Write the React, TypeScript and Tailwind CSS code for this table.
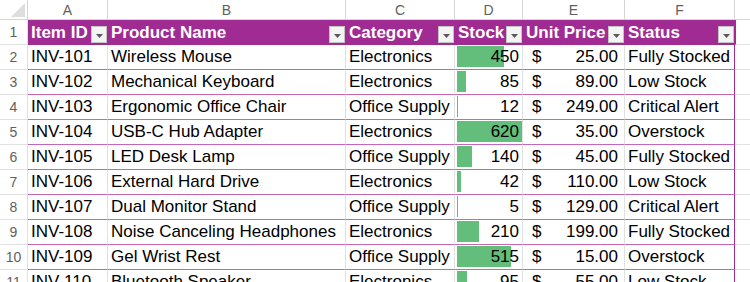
import React from "react";

type Row = {
  id: string;
  name: string;
  cat: string;
  stock: number;
  price: string;
  status: string;
};

const rows: Row[] = [
  { id: "INV-101", name: "Wireless Mouse", cat: "Electronics", stock: 450, price: "25.00", status: "Fully Stocked" },
  { id: "INV-102", name: "Mechanical Keyboard", cat: "Electronics", stock: 85, price: "89.00", status: "Low Stock" },
  { id: "INV-103", name: "Ergonomic Office Chair", cat: "Office Supply", stock: 12, price: "249.00", status: "Critical Alert" },
  { id: "INV-104", name: "USB-C Hub Adapter", cat: "Electronics", stock: 620, price: "35.00", status: "Overstock" },
  { id: "INV-105", name: "LED Desk Lamp", cat: "Office Supply", stock: 140, price: "45.00", status: "Fully Stocked" },
  { id: "INV-106", name: "External Hard Drive", cat: "Electronics", stock: 42, price: "110.00", status: "Low Stock" },
  { id: "INV-107", name: "Dual Monitor Stand", cat: "Office Supply", stock: 5, price: "129.00", status: "Critical Alert" },
  { id: "INV-108", name: "Noise Canceling Headphones", cat: "Electronics", stock: 210, price: "199.00", status: "Fully Stocked" },
  { id: "INV-109", name: "Gel Wrist Rest", cat: "Office Supply", stock: 515, price: "15.00", status: "Overstock" },
  { id: "INV-110", name: "Bluetooth Speaker", cat: "Electronics", stock: 95, price: "55.00", status: "Low Stock" },
];

const MAX = 620;
const BAR_MAX = 65;

function Dropdown() {
  return (
    <div className="ml-auto mr-[1px] mt-[6px] flex h-[17px] w-[16px] shrink-0 items-center justify-center border border-[#c4c4c4] bg-[#f4f4f4]">
      <svg width="7" height="4" viewBox="0 0 7 4" className="mt-[2px]">
        <polygon points="0,0 7,0 3.5,4" fill="#5a5a5a" />
      </svg>
    </div>
  );
}

function HeaderCell({ label, w }: { label: string; w: string }) {
  return (
    <div className={`${w} flex h-[25px] shrink-0 items-start bg-[#a02b93] pl-[3px]`}>
      <span className="whitespace-nowrap text-[17px] font-bold leading-[25px] text-white">{label}</span>
      <Dropdown />
    </div>
  );
}

export default function App() {
  const cols = ["A", "B", "C", "D", "E", "F"];
  const widths = ["w-[80px]", "w-[238px]", "w-[109px]", "w-[68px]", "w-[102px]", "w-[110px]"];
  return (
    <div className="h-[282px] w-[750px] overflow-hidden bg-white font-['Liberation_Sans',Arial,sans-serif] text-black">
      {/* column letters */}
      <div className="flex h-[20px]">
        <div className="flex h-[20px] w-[28px] shrink-0 items-end justify-end border-b border-r border-[#d6d6d6] pb-[2px] pr-[2px]">
          <svg width="14" height="14" viewBox="0 0 14 14">
            <polygon points="14,0 14,14 0,14" fill="#dedede" />
          </svg>
        </div>
        {cols.map((c, i) => (
          <div
            key={c}
            className={`${widths[i]} flex h-[20px] shrink-0 items-center justify-center border-b border-r border-[#d6d6d6] pt-[1px] text-[14px] text-[#5f5f5f]`}
          >
            {c}
          </div>
        ))}
        <div className="h-[20px] flex-1 border-b border-[#d6d6d6]" />
      </div>

      {/* table header row */}
      <div className="flex h-[25px]">
        <div className="flex h-[25px] w-[28px] shrink-0 items-center justify-center border-b border-r border-[#e1e1e1] pt-[1px] text-[14px] text-[#5f5f5f]">
          1
        </div>
        <HeaderCell label="Item ID" w="w-[80px]" />
        <HeaderCell label="Product Name" w="w-[238px]" />
        <HeaderCell label="Category" w="w-[109px]" />
        <HeaderCell label="Stock" w="w-[68px]" />
        <HeaderCell label="Unit Price" w="w-[102px]" />
        <HeaderCell label="Status" w="w-[110px]" />
        <div className="h-[25px] flex-1 border-b border-l border-[#e1e1e1] border-l-[#a02b93]" />
      </div>

      {/* data rows */}
      {rows.map((r, idx) => {
        const barW = Math.max(0.6, (r.stock / MAX) * BAR_MAX);
        return (
          <div key={r.id} className="flex h-[25px]">
            <div className="flex h-[25px] w-[28px] shrink-0 items-center justify-center border-b border-r border-[#e1e1e1] pt-[1px] text-[14px] text-[#5f5f5f]">
              {idx + 2}
            </div>
            <div className="w-[80px] h-[25px] shrink-0 whitespace-nowrap border-b border-r border-b-[#c566bb] border-r-[#e1e1e1] pl-[3px] text-[17px] leading-[24px]">
              {r.id}
            </div>
            <div className="w-[238px] h-[25px] shrink-0 whitespace-nowrap border-b border-r border-b-[#c566bb] border-r-[#e1e1e1] pl-[3px] text-[17px] leading-[24px]">
              {r.name}
            </div>
            <div className="w-[109px] h-[25px] shrink-0 whitespace-nowrap border-b border-r border-b-[#c566bb] border-r-[#e1e1e1] pl-[3px] text-[17px] leading-[24px]">
              {r.cat}
            </div>
            <div className="relative w-[68px] h-[25px] shrink-0 border-b border-r border-b-[#c566bb] border-r-[#e1e1e1] pr-[3px] text-right text-[17px] leading-[24px]">
              <div
                className="absolute left-[2px] top-[1px] h-[21px] bg-[#63be7b]"
                style={{ width: `${barW}px` }}
              />
              <span className="relative">{r.stock}</span>
            </div>
            <div className="flex w-[102px] h-[25px] shrink-0 justify-between border-b border-r border-b-[#c566bb] border-r-[#e1e1e1] pl-[9px] pr-[6px] text-[17px] leading-[24px]">
              <span>$</span>
              <span>{r.price}</span>
            </div>
            <div className="w-[110px] h-[25px] shrink-0 whitespace-nowrap border-b border-r border-b-[#c566bb] border-r-[#a02b93] pl-[3px] text-[17px] leading-[24px]">
              {r.status}
            </div>
            <div className="h-[25px] flex-1 border-b border-[#e1e1e1]" />
          </div>
        );
      })}
    </div>
  );
}
